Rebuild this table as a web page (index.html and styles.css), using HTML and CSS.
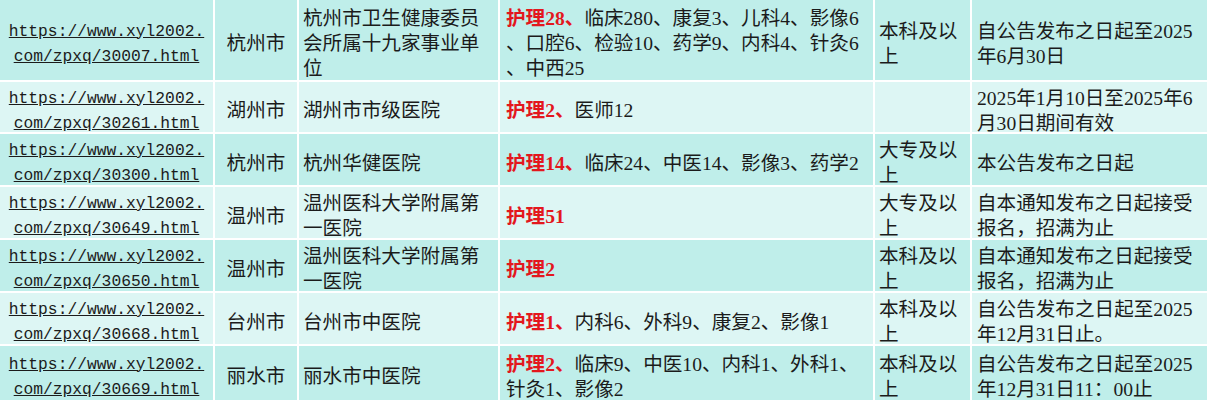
FILE: index.html
```html
<!DOCTYPE html>
<html lang="zh-CN">
<head>
<meta charset="utf-8">
<title>招聘信息</title>
<link rel="stylesheet" href="styles.css">
</head>
<body>
<div class="sheet">
  <div class="row dark">
    <div class="cell url"><a href="#">https://www.xyl2002.com/zpxq/30007.html</a></div>
    <div class="cell city">杭州市</div>
    <div class="cell unit">杭州市卫生健康委员会所属十九家事业单位</div>
    <div class="cell posts"><span><b class="hl">护理28、</b>临床280、康复3、儿科4、影像6<br>、口腔6、检验10、药学9、内科4、针灸6<br>、中西25</span></div>
    <div class="cell edu">本科及以上</div>
    <div class="cell date">自公告发布之日起至2025年6月30日</div>
  </div>
  <div class="row light">
    <div class="cell url"><a href="#">https://www.xyl2002.com/zpxq/30261.html</a></div>
    <div class="cell city">湖州市</div>
    <div class="cell unit">湖州市市级医院</div>
    <div class="cell posts"><span><b class="hl">护理2、</b>医师12</span></div>
    <div class="cell edu"></div>
    <div class="cell date">2025年1月10日至2025年6月30日期间有效</div>
  </div>
  <div class="row dark">
    <div class="cell url"><a href="#">https://www.xyl2002.com/zpxq/30300.html</a></div>
    <div class="cell city">杭州市</div>
    <div class="cell unit">杭州华健医院</div>
    <div class="cell posts"><span><b class="hl">护理14、</b>临床24、中医14、影像3、药学2</span></div>
    <div class="cell edu">大专及以上</div>
    <div class="cell date">本公告发布之日起</div>
  </div>
  <div class="row light">
    <div class="cell url"><a href="#">https://www.xyl2002.com/zpxq/30649.html</a></div>
    <div class="cell city">温州市</div>
    <div class="cell unit">温州医科大学附属第一医院</div>
    <div class="cell posts"><span><b class="hl">护理51</b></span></div>
    <div class="cell edu">大专及以上</div>
    <div class="cell date">自本通知发布之日起接受报名，招满为止</div>
  </div>
  <div class="row dark">
    <div class="cell url"><a href="#">https://www.xyl2002.com/zpxq/30650.html</a></div>
    <div class="cell city">温州市</div>
    <div class="cell unit">温州医科大学附属第一医院</div>
    <div class="cell posts"><span><b class="hl">护理2</b></span></div>
    <div class="cell edu">本科及以上</div>
    <div class="cell date">自本通知发布之日起接受报名，招满为止</div>
  </div>
  <div class="row light">
    <div class="cell url"><a href="#">https://www.xyl2002.com/zpxq/30668.html</a></div>
    <div class="cell city">台州市</div>
    <div class="cell unit">台州市中医院</div>
    <div class="cell posts"><span><b class="hl">护理1、</b>内科6、外科9、康复2、影像1</span></div>
    <div class="cell edu">本科及以上</div>
    <div class="cell date">自公告发布之日起至2025年12月31日止。</div>
  </div>
  <div class="row dark">
    <div class="cell url"><a href="#">https://www.xyl2002.com/zpxq/30669.html</a></div>
    <div class="cell city">丽水市</div>
    <div class="cell unit">丽水市中医院</div>
    <div class="cell posts"><span><b class="hl">护理2、</b>临床9、中医10、内科1、外科1、针灸1、影像2</span></div>
    <div class="cell edu">本科及以上</div>
    <div class="cell date">自公告发布之日起至2025年12月31日11：00止</div>
  </div>
</div>
</body>
</html>
```

FILE: styles.css
```css
html, body {
  margin: 0;
  padding: 0;
  background: #ffffff;
}

.sheet {
  display: grid;
  grid-template-columns: 213px 82px 199px 373px 95px 235px;
  grid-template-rows: 80px 50px 51px 51px 51px 51px 54px;
  gap: 2px;
  width: 1207px;
  height: 400px;
  overflow: hidden;
  background: #ffffff;
  font-family: "Liberation Serif", "Noto Sans CJK SC", serif;
  font-size: 19.6px;
  line-height: 25px;
  color: #1b1b1b;
}

.row {
  display: contents;
}

.cell {
  display: flex;
  align-items: center;
  box-sizing: border-box;
  padding: 7px 4px 0 4px;
  min-width: 0;
}

.row.dark > .cell {
  background: #bfeeea;
}

.row.light > .cell {
  background: #ddf6f4;
}

.url {
  justify-content: center;
  text-align: center;
  padding-left: 6px;
  padding-right: 6px;
}

.url a {
  font-family: "Liberation Mono", monospace;
  font-size: 16.3px;
  color: #1b1b1b;
  text-decoration: underline;
  word-break: break-all;
}

.city {
  justify-content: center;
}

.posts {
  padding-left: 6px;
}

.date {
  padding-left: 5px;
}

.hl {
  color: #e3171d;
  font-weight: bold;
}
```
